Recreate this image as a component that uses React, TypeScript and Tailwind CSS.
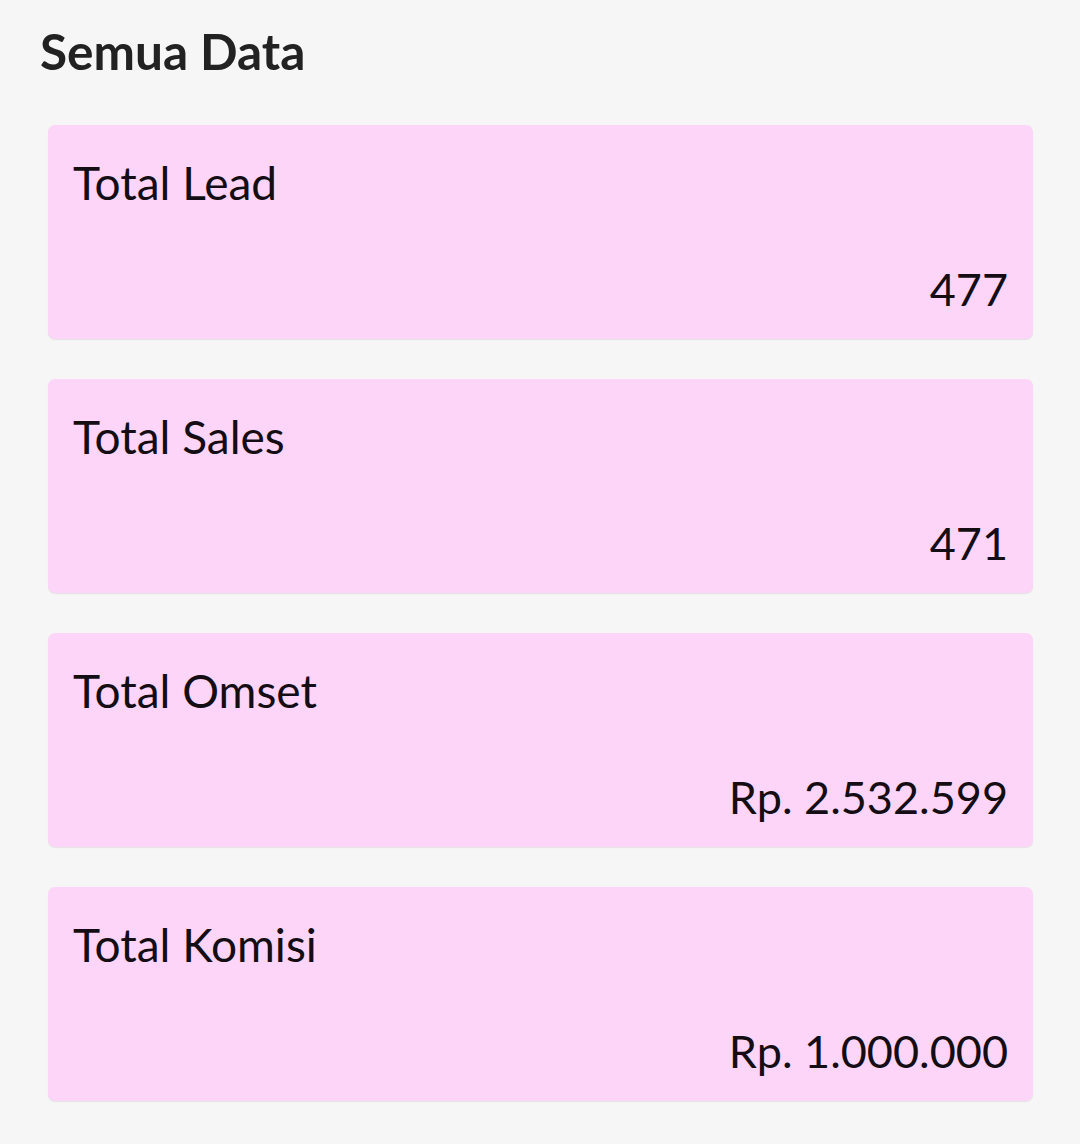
const stats = [
  { label: 'Total Lead', value: '477' },
  { label: 'Total Sales', value: '471' },
  { label: 'Total Omset', value: 'Rp. 2.532.599' },
  { label: 'Total Komisi', value: 'Rp. 1.000.000' },
];

export default function App() {
  return (
    <div
      className="min-h-[1144px] w-[1080px] bg-[#f6f6f6] pl-[40px] pr-[47px] pt-[22px]"
      style={{ fontFamily: 'Lato, "Noto Sans", sans-serif' }}
    >
      <h1 className="text-[49.5px] font-bold leading-[1.2] text-[#222222]">Semua Data</h1>

      <div className="mt-[44px] ml-[8px] flex flex-col gap-[40px]">
        {stats.map((s) => (
          <div
            key={s.label}
            className="h-[214px] rounded-[7px] bg-[#fcd5f8] px-[25px] pt-[30px] shadow-[0_1px_1px_rgba(0,0,0,0.08)]"
          >
            <div className="text-[46px] leading-[1.2] text-[#140d14]">{s.label}</div>
            <div className="mt-[51px] text-right text-[45px] leading-[1.2] text-[#140d14]">{s.value}</div>
          </div>
        ))}
      </div>
    </div>
  );
}
